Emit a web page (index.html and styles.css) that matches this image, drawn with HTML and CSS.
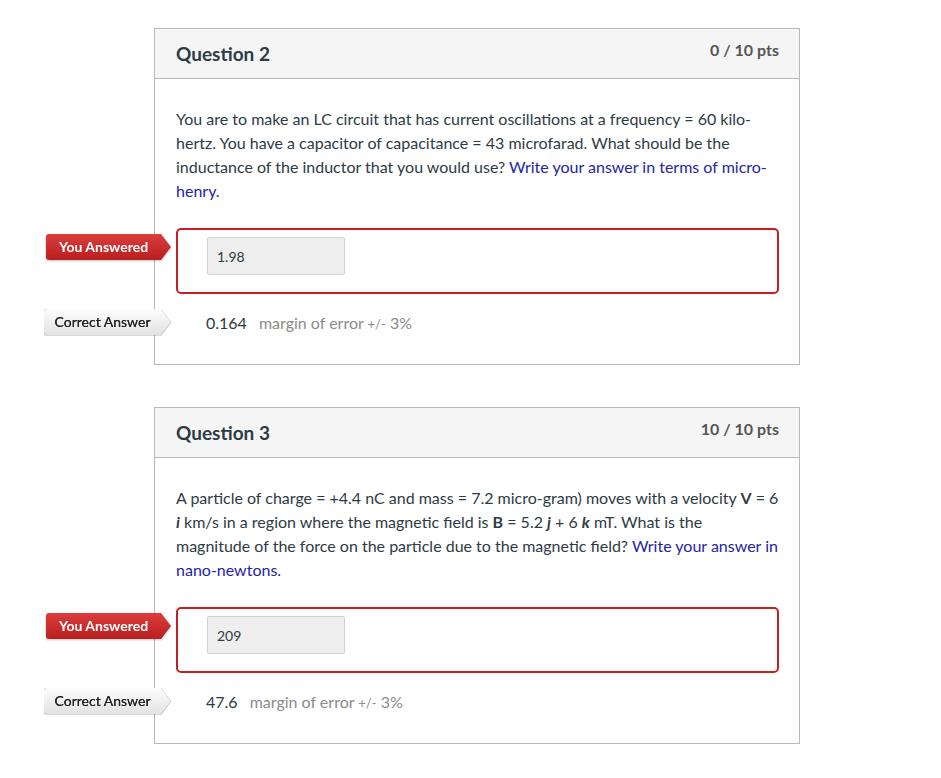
FILE: index.html
```html
<!DOCTYPE html>
<html lang="en">
<head>
    <meta charset="UTF-8">
    <meta name="viewport" content="width=device-width, initial-scale=1.0">
    <title>Quiz Results</title>
    <link rel="stylesheet" href="styles.css">
</head>
<body>

    <div class="quiz">

        <div class="question">
            <div class="question-header">
                <h2 class="question-name">Question 2</h2>
                <span class="question-pts">0 / 10 pts</span>
            </div>
            <div class="question-body">
                <p class="question-text">You are to make an LC circuit that has current oscillations at a frequency = 60 kilo-hertz. You have a capacitor of capacitance = 43 microfarad. What should be the inductance of the inductor that you would use? <span class="hint">Write your answer in terms of micro-henry.</span></p>

                <div class="answer wrong">
                    <span class="label-wrap"><span class="label label-you">You Answered</span></span>
                    <input class="answer-input" type="text" value="1.98" readonly>
                </div>

                <div class="correct-row">
                    <span class="label-wrap label-wrap-correct"><span class="label label-correct">Correct Answer</span></span>
                    <span class="correct-value">0.164</span>
                    <span class="margin">margin of error <small>+/-</small> 3%</span>
                </div>
            </div>
        </div>

        <div class="question">
            <div class="question-header">
                <h2 class="question-name">Question 3</h2>
                <span class="question-pts">10 / 10 pts</span>
            </div>
            <div class="question-body">
                <p class="question-text">A particle of charge = +4.4 nC and mass = 7.2 micro-gram) moves with a velocity <b>V</b> = 6 <b><i>i</i></b> km/s in a region where the magnetic field is <b>B</b> = 5.2 <b><i>j</i></b> + 6 <b><i>k</i></b> mT. What is the magnitude of the force on the particle due to the magnetic field? <span class="hint">Write your answer in nano-newtons.</span></p>

                <div class="answer wrong">
                    <span class="label-wrap"><span class="label label-you">You Answered</span></span>
                    <input class="answer-input" type="text" value="209" readonly>
                </div>

                <div class="correct-row">
                    <span class="label-wrap label-wrap-correct"><span class="label label-correct">Correct Answer</span></span>
                    <span class="correct-value">47.6</span>
                    <span class="margin">margin of error <small>+/-</small> 3%</span>
                </div>
            </div>
        </div>

    </div>

</body>
</html>
```

FILE: styles.css
```css
body {
    font-family: Lato, "Open Sans", "Helvetica Neue", sans-serif;
    margin: 0;
    background-color: #fff;
    color: #2d3b45;
}
.quiz {
    padding-top: 28px;
    margin-left: 154px;
    width: 646px;
}
.question {
    position: relative;
    border: 1px solid #b8b8b8;
    margin-bottom: 42px;
}
.question-header {
    display: flex;
    justify-content: space-between;
    align-items: flex-start;
    height: 49px;
    padding: 0 20px 0 21px;
    background-color: #f5f5f5;
    border-bottom: 1px solid #b8b8b8;
}
.question-name {
    margin: 13px 0 0;
    font-size: 19px;
    font-weight: bold;
    line-height: 24px;
    color: #2d3b45;
}
.question-pts {
    margin-top: 11px;
    font-size: 16px;
    font-weight: bold;
    line-height: 20px;
    color: #555;
}
.question-body {
    padding: 28px 20px 29px 21px;
}
.question-text {
    margin: 0;
    font-size: 16px;
    line-height: 24px;
}
.hint {
    color: #2424a8;
}
.answer {
    position: relative;
    margin-top: 25px;
    height: 62px;
    border: 2px solid #c91c23;
    border-radius: 5px;
}
.answer-input {
    box-sizing: border-box;
    margin: 7px 0 0 29px;
    width: 138px;
    height: 38px;
    padding: 0 9px;
    font-family: inherit;
    font-size: 14px;
    color: #2d3b45;
    background-color: #eee;
    border: 1px solid #d0d0d0;
    border-radius: 2px;
    outline: none;
}
.correct-row {
    position: relative;
    display: flex;
    align-items: center;
    margin-top: 15px;
    height: 26px;
    padding-left: 30px;
}
.correct-value {
    font-size: 16px;
    margin-right: 12px;
}
.margin {
    font-size: 16px;
    color: #8b8b8b;
}
.margin small {
    font-size: 13px;
}
.label-wrap {
    position: absolute;
    top: 4px;
    left: -132px;
    filter: drop-shadow(0 1px 1px rgba(0,0,0,0.25));
}
.label-wrap-correct {
    top: 0;
    left: -132px;
    filter: drop-shadow(0 0 0.6px #7a7a7a) drop-shadow(0 1px 0.5px rgba(0,0,0,0.15));
}
.label {
    display: block;
    height: 26px;
    line-height: 25px;
    font-size: 14px;
    text-align: center;
    border-radius: 3px 0 0 3px;
    clip-path: polygon(0 0, calc(100% - 10px) 0, 100% 50%, calc(100% - 10px) 100%, 0 100%);
}
.label-you {
    width: 115px;
    padding-right: 10px;
    font-weight: bold;
    color: #fff;
    background: linear-gradient(#dc3d3d, #b81f1f);
}
.label-correct {
    width: 117px;
    padding-right: 10px;
    color: #222;
    text-shadow: 0 0 0.4px #222;
    background: linear-gradient(#fdfdfd, #e2e2e2);
}
```
